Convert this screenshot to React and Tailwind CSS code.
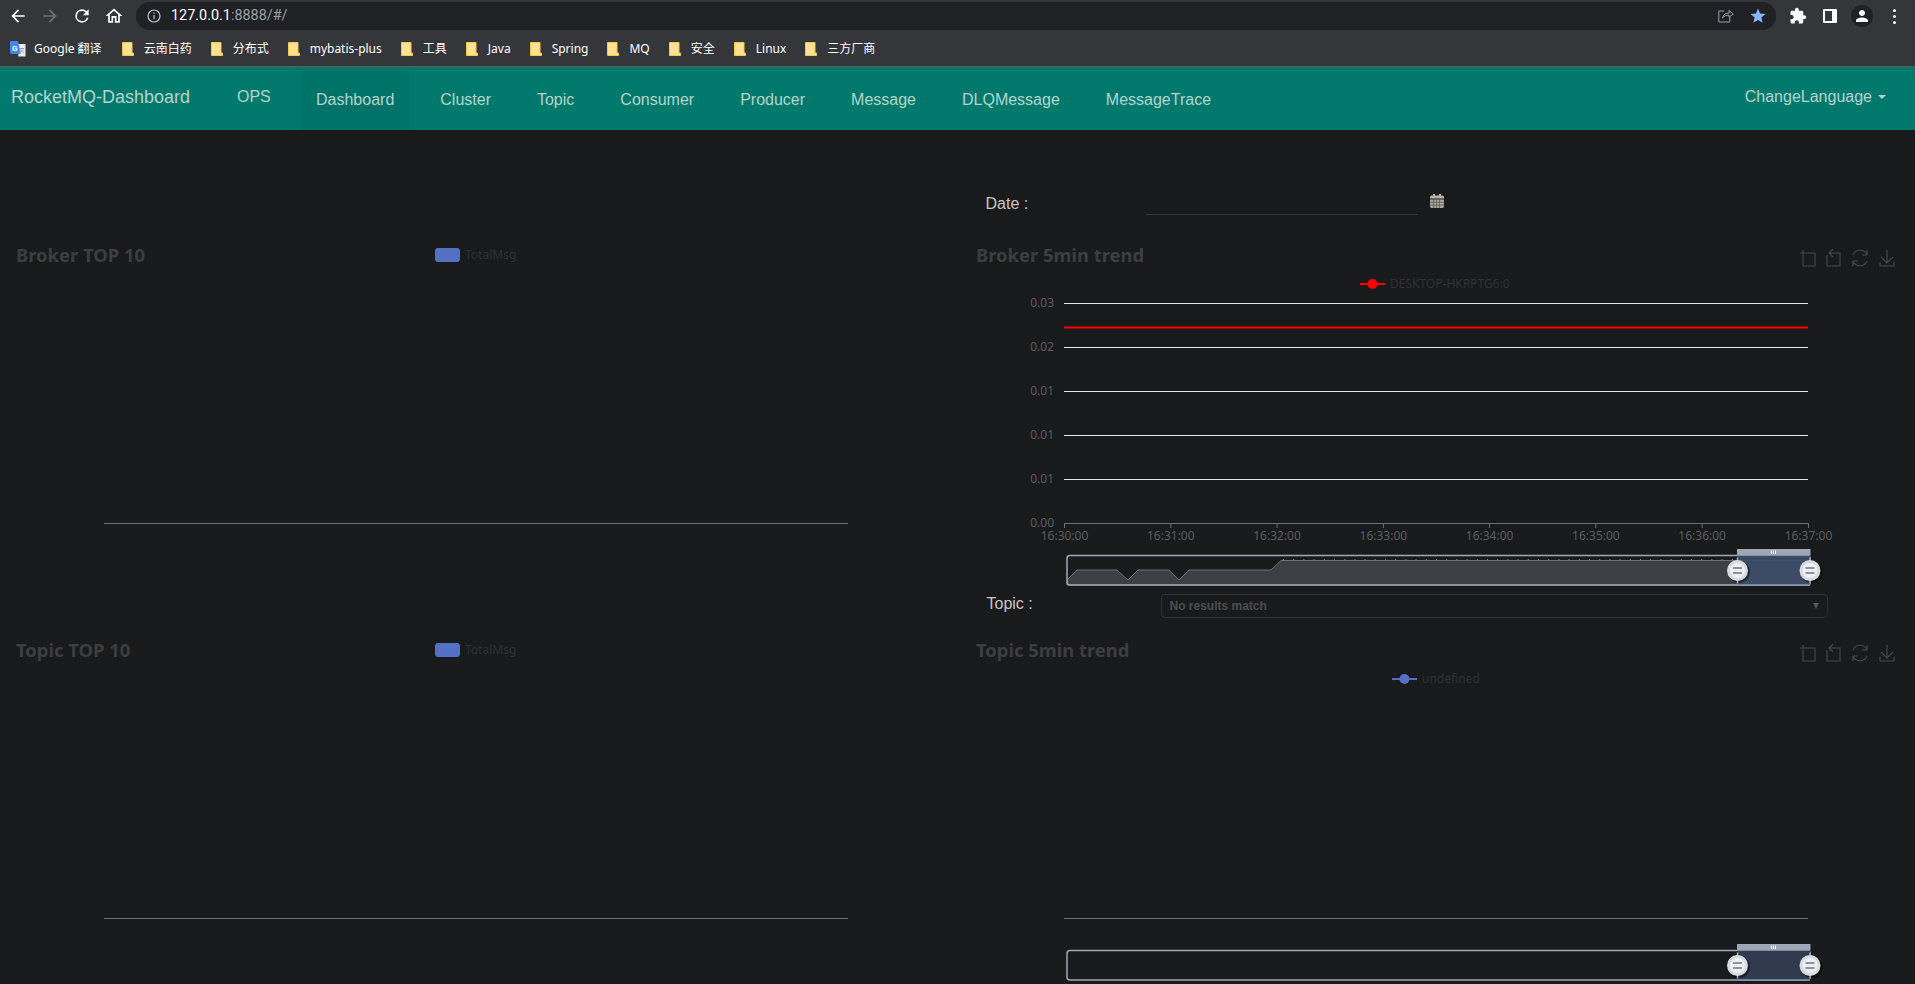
const yTicks = [
  ["0.03", 68],
  ["0.02", 112],
  ["0.01", 156],
  ["0.01", 200],
  ["0.01", 244],
];
const xTicks = ["16:30:00", "16:31:00", "16:32:00", "16:33:00", "16:34:00", "16:35:00", "16:36:00", "16:37:00"];
const bookmarks = ["云南白药", "分布式", "mybatis-plus", "工具", "Java", "Spring", "MQ", "安全", "Linux", "三方厂商"];
const navItems = ["Dashboard", "Cluster", "Topic", "Consumer", "Producer", "Message", "DLQMessage", "MessageTrace"];

function ChromeIcon({ d, className = "w-5 h-5 text-white" }) {
  return (
    <svg viewBox="0 0 24 24" className={className} fill="currentColor">
      <path d={d} />
    </svg>
  );
}

function FolderIcon() {
  return (
    <svg viewBox="0 0 12 14" className="w-3 h-[14px] shrink-0">
      <path d="M0.5 0.5h9.5v10.5h1.5v2.5H0.5z" fill="#fde293" stroke="#f5c94f" strokeWidth="1" />
    </svg>
  );
}

function GoogleTranslateIcon() {
  return (
    <svg viewBox="0 0 16 16" className="w-4 h-4 shrink-0">
      <path d="M7 3h8.5v12.5H8.5z" fill="#e8eaed" />
      <path d="M9 7.5h5M11.5 7v1M10 11c2-.8 3-2 3.5-3.5M10.5 8.5c.6 1.4 1.6 2.4 3.2 3" stroke="#9aa0a6" strokeWidth="0.9" fill="none" />
      <path d="M0 1.5C0 .7.7 0 1.5 0H8l2.5 13H1.5C.7 13 0 12.3 0 11.5z" fill="#4285f4" />
      <text x="2" y="9.5" fontSize="8" fontWeight="700" fill="#fff" fontFamily="Roboto, sans-serif">G</text>
    </svg>
  );
}

function BrowserToolbar() {
  return (
    <div className="flex h-[30px] pt-[2px] pl-[2px] pr-[5px] bg-[#35363a]">
      <div className="flex items-center">
        <div className="w-8 flex justify-center"><ChromeIcon d="M20 11H7.83l5.59-5.59L12 4l-8 8 8 8 1.41-1.41L7.83 13H20v-2z" /></div>
        <div className="w-8 flex justify-center"><ChromeIcon className="w-5 h-5 text-[#6f7074]" d="M4 11h12.17l-5.59-5.59L12 4l8 8-8 8-1.41-1.41L16.17 13H4v-2z" /></div>
        <div className="w-8 flex justify-center"><ChromeIcon d="M17.65 6.35A7.96 7.96 0 0 0 12 4a8 8 0 1 0 7.75 10h-2.08A6 6 0 1 1 12 6c1.66 0 3.14.69 4.22 1.78L13 11h7V4l-2.35 2.35z" /></div>
        <div className="w-8 flex justify-center"><ChromeIcon d="M12 5.69l5 4.5V18h-2v-6H9v6H7v-7.81l5-4.5M12 3L2 12h3v8h6v-6h2v6h6v-8h3L12 3z" /></div>
      </div>
      <div className="flex-1 ml-[6px] h-7 rounded-full bg-[#202124] flex items-center pl-[11px] pr-[9px]">
        <svg viewBox="0 0 14 14" className="w-[14px] h-[14px] shrink-0" fill="none" stroke="#bdc1c6" strokeWidth="1.2">
          <circle cx="7" cy="7" r="6" />
          <path d="M7 6v4.2M7 3.6v1.2" />
        </svg>
        <span className="ml-[10px] text-[14.4px] leading-none text-white font-['Roboto',sans-serif]">
          127.0.0.1<span className="text-[#9aa0a6]">:8888/#/</span>
        </span>
        <div className="ml-auto flex items-center gap-[15px]">
          <svg viewBox="0 0 16 14" className="w-4 h-[14px]" fill="none" stroke="#9aa0a6" strokeWidth="1">
            <path d="M6 2H.8v11h11V8" />
            <path d="M4.5 9c.4-3.2 3-5 6.5-5V1.4L15.2 5 11 8.4V6C8.3 6 6.2 7 4.5 9z" />
          </svg>
          <ChromeIcon className="w-[18px] h-[18px] text-[#8ab4f8]" d="M12 17.27L18.18 21l-1.64-7.03L22 9.24l-7.19-.61L12 2 9.19 8.63 2 9.24l5.46 4.73L5.82 21z" />
        </div>
      </div>
      <div className="flex items-center ml-[6px]">
        <div className="w-8 flex justify-center">
          <ChromeIcon className="w-[18px] h-[18px] text-white" d="M20.5 11H19V7c0-1.1-.9-2-2-2h-4V3.5C13 2.12 11.88 1 10.5 1S8 2.12 8 3.5V5H4c-1.1 0-1.99.9-1.99 2v3.8H3.5c1.49 0 2.7 1.21 2.7 2.7s-1.21 2.7-2.7 2.7H2V20c0 1.1.9 2 2 2h3.8v-1.5c0-1.49 1.21-2.7 2.7-2.7 1.49 0 2.7 1.21 2.7 2.7V22H17c1.1 0 2-.9 2-2v-4h1.5c1.38 0 2.5-1.12 2.5-2.5S21.88 11 20.5 11z" />
        </div>
        <div className="w-8 flex justify-center">
          <div className="w-[14px] h-[14px] border-2 border-r-[5px] border-white rounded-[1px]" />
        </div>
        <div className="w-8 flex justify-center">
          <div className="w-[22px] h-[22px] rounded-full bg-[#202124] flex items-center justify-center">
            <ChromeIcon className="w-[18px] h-[18px] text-white" d="M12 12c2.21 0 4-1.79 4-4s-1.79-4-4-4-4 1.79-4 4 1.79 4 4 4zm0 2c-2.67 0-8 1.34-8 4v2h16v-2c0-2.66-5.33-4-8-4z" />
          </div>
        </div>
        <div className="w-8 flex flex-col items-center gap-[3px]">
          <span className="w-[3px] h-[3px] rounded-full bg-white" />
          <span className="w-[3px] h-[3px] rounded-full bg-white" />
          <span className="w-[3px] h-[3px] rounded-full bg-white" />
        </div>
      </div>
    </div>
  );
}

function BookmarksBar() {
  return (
    <div className="flex items-center h-[37px] pl-[10px] pt-[1px] bg-[#35363a] border-b border-[#5c5d60] text-[12px] text-white font-['Noto_Sans','Noto_Sans_CJK_SC',sans-serif]">
      <div className="flex items-center gap-2 mr-px">
        <GoogleTranslateIcon />
        <span>Google 翻译</span>
      </div>
      {bookmarks.map((name) => (
        <div key={name} className="flex items-center gap-[10px] ml-[19px]">
          <FolderIcon />
          <span>{name}</span>
        </div>
      ))}
    </div>
  );
}

function Navbar() {
  return (
    <nav className="flex h-[63px] pt-[3px] bg-[#00796d] text-[#b4d4cc] font-['Liberation_Sans',sans-serif] text-[16px]">
      <div className="ml-[11px] w-[226px] h-[60px] pb-[6px] flex items-center text-[18px]">RocketMQ-Dashboard</div>
      <div className="w-[64px] h-[60px] pb-[6px] flex items-center">OPS</div>
      <div className="flex gap-4">
        {navItems.map((item) => (
          <div
            key={item}
            className={`h-[60px] px-[15px] flex items-center ${item === "Dashboard" ? "bg-[#007368]" : ""}`}
          >
            {item}
          </div>
        ))}
      </div>
      <div className="ml-auto mr-[29px] h-[60px] pb-[6px] flex items-center gap-[6px]">
        ChangeLanguage
        <span className="w-0 h-0 border-x-4 border-x-transparent border-t-4 border-t-[#b4d4cc]" />
      </div>
    </nav>
  );
}

function ChartTitle({ x, children }) {
  return (
    <text x={x} y="27" fontSize="18.4" fontWeight="700" fill="#3d3e40" fontFamily="'Noto Sans', sans-serif">
      {children}
    </text>
  );
}

function BarChart({ title }) {
  return (
    <svg width="957" height="354" className="block">
      <ChartTitle x="16">{title}</ChartTitle>
      <rect x="435" y="13" width="25" height="14" rx="3" fill="#5470c6" />
      <text x="465" y="24" fontSize="12" fill="#303133" fontFamily="'Noto Sans', sans-serif">TotalMsg</text>
      <line x1="104" x2="848" y1="288.5" y2="288.5" stroke="#6e7079" />
    </svg>
  );
}

function Toolbox() {
  return (
    <g fill="none" stroke="#48494b" strokeWidth="1.1">
      <path d="M842 18H857V31H845V15" />
      <path d="M871 18H882V31H869V20M875 14l-4 4 4 4" />
      <path d="M895 20a7.5 7.5 0 0 1 14 0M909 15v5h-5M909 26a7.5 7.5 0 0 1-14 0M895 31v-5h5" />
      <path d="M929 15v13M923 22l6 6 6-6M922 27v4h14v-4" />
    </g>
  );
}

function Handle({ cx, cy }) {
  return (
    <g>
      <circle cx={cx + 1.5} cy={cy + 1.5} r="11" fill="#000" opacity="0.45" />
      <line x1={cx} x2={cx} y1={cy - 13} y2={cy + 13} stroke="#a9afbd" strokeWidth="1.5" />
      <circle cx={cx} cy={cy} r="10.5" fill="#d9dbe0" />
      <circle cx={cx} cy={cy} r="7.5" fill="#eeeff1" />
      <path d={`M${cx - 4.5} ${cy - 2.5}h9M${cx - 4.5} ${cy + 2.5}h9`} stroke="#6b7590" strokeWidth="1.5" />
    </g>
  );
}

function Slider({ filled }) {
  return (
    <g>
      {filled && (
        <>
          <path
            d="M109 345 L119 335 L159 335 L170 345 L180 335 L211 335 L221 345 L231 335 L313 335 L323 325.5 L852 325.5 L852 350 L109 350 Z"
            fill="#3d3f44"
            stroke="#6d7079"
          />
          <line x1="325" x2="852" y1="324.5" y2="324.5" stroke="#80838a" strokeDasharray="1 9.2" />
        </>
      )}
      <rect x="109" y="320.5" width="743" height="29.5" rx="3" fill="none" stroke="#a3a8b5" strokeWidth="1.5" />
      <rect x="779" y="320.5" width="73" height="29.5" fill={filled ? "#3d4d68" : "#2f3a4f"} opacity={filled ? 0.95 : 1} />
      <path d="M779 350h73" stroke="#8f97aa" strokeWidth="1.5" />
      <rect x="779" y="314" width="73.5" height="6.5" fill="#9ea7b8" />
      <path d="M813.5 315.5v3.5M815.5 315.5v3.5M817.5 315.5v3.5" stroke="#fff" strokeWidth="1" />
      <Handle cx={779.5} cy={335.5} />
      <Handle cx={852} cy={335.5} />
    </g>
  );
}

function BrokerTrend() {
  return (
    <svg width="958" height="355" className="block">
      <ChartTitle x="18">Broker 5min trend</ChartTitle>
      <Toolbox />
      <line x1="402" x2="427" y1="49" y2="49" stroke="#ff0000" strokeWidth="2" />
      <circle cx="414.5" cy="49" r="5" fill="#ff0000" />
      <text x="432" y="53" fontSize="12" fill="#303133" fontFamily="'Noto Sans', sans-serif">DESKTOP-HKRPTG6:0</text>
      {yTicks.map(([label, y]) => (
        <g key={y}>
          <line x1="106" x2="850" y1={y + 0.5} y2={y + 0.5} stroke="#e6e6e6" />
          <text x="96" y={y + 4} textAnchor="end" fontSize="12" fill="#5c5d60" fontFamily="'Noto Sans', sans-serif">{label}</text>
        </g>
      ))}
      <line x1="106" x2="850" y1="92.5" y2="92.5" stroke="#ff0000" strokeWidth="2" />
      <text x="96" y="292" textAnchor="end" fontSize="12" fill="#5c5d60" fontFamily="'Noto Sans', sans-serif">0.00</text>
      <line x1="106" x2="850" y1="288.5" y2="288.5" stroke="#6e7079" />
      {xTicks.map((label, i) => {
        const x = 106.5 + i * 106.28;
        return (
          <g key={label}>
            <line x1={x} x2={x} y1="288" y2="293" stroke="#6e7079" />
            <text x={x} y="305" textAnchor="middle" fontSize="12" fill="#5c5d60" fontFamily="'Noto Sans', sans-serif">{label}</text>
          </g>
        );
      })}
      <Slider filled />
    </svg>
  );
}

function TopicTrend() {
  return (
    <svg width="958" height="354" className="block">
      <ChartTitle x="18">Topic 5min trend</ChartTitle>
      <Toolbox />
      <line x1="434" x2="459" y1="49" y2="49" stroke="#5470c6" strokeWidth="2" />
      <circle cx="446.5" cy="49" r="5" fill="#5470c6" />
      <text x="464" y="53" fontSize="12" fill="#303133" fontFamily="'Noto Sans', sans-serif">undefined</text>
      <line x1="106" x2="850" y1="288.5" y2="288.5" stroke="#6e7079" />
      <Slider />
    </svg>
  );
}

function DateRow() {
  return (
    <div className="flex items-start pt-[62px] pl-7 text-[16px] text-[#c9c7bf] font-['Liberation_Sans',sans-serif]">
      <label className="w-[160px] mt-px leading-[22px]">Date :</label>
      <div className="w-[272px] h-[23px] border-b border-[#333436]" />
      <svg viewBox="0 0 14 14" className="w-[14px] h-[14px] ml-3 mt-[2px]">
        <path d="M0 3a1.5 1.5 0 0 1 1.5-1.5H3V0h2v1.5h4V0h2v1.5h1.5A1.5 1.5 0 0 1 14 3v1.5H0z" fill="#b5b1a6" />
        <path d="M0 5.5h14v7A1.5 1.5 0 0 1 12.5 14h-11A1.5 1.5 0 0 1 0 12.5z" fill="#a8a498" />
        <path d="M3.5 5.5V14M6.5 5.5V14M9.5 5.5V14M0 8.3h14M0 11.1h14" stroke="#56554f" strokeWidth="0.7" />
      </svg>
    </div>
  );
}

function TopicRow() {
  return (
    <div className="flex items-start pt-1 pl-[29px] text-[#c9c7bf] font-['Liberation_Sans',sans-serif]">
      <label className="w-[174px] mt-px text-[16px] leading-[18px]">Topic :</label>
      <div className="w-[667px] h-[24px] px-2 flex items-center justify-between rounded-[4px] border border-[#303134] text-[12px] font-bold text-[#4c4d4f]">
        No results match
        <span className="w-0 h-0 border-x-[3.5px] border-x-transparent border-t-[6px] border-t-[#55565a]" />
      </div>
    </div>
  );
}

export default function App() {
  return (
    <div className="h-[984px] overflow-hidden bg-[#191a1c]">
      <BrowserToolbar />
      <BookmarksBar />
      <Navbar />
      <main className="grid grid-cols-2 grid-rows-[105px_355px_40px_354px]">
        <div />
        <DateRow />
        <BarChart title="Broker TOP 10" />
        <BrokerTrend />
        <div />
        <TopicRow />
        <BarChart title="Topic TOP 10" />
        <TopicTrend />
      </main>
    </div>
  );
}
